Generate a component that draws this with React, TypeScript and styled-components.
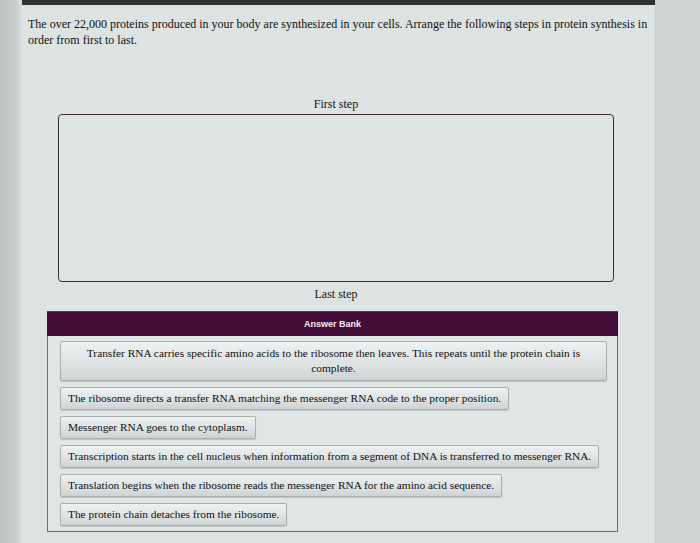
import styled, { createGlobalStyle } from 'styled-components';

const GlobalStyle = createGlobalStyle`
  html, body {
    margin: 0;
    padding: 0;
    background: #cfd5d5;
  }
  body {
    font-family: 'Liberation Serif', 'Times New Roman', serif;
    color: #141414;
  }
`;

const answers = [
  'Transfer RNA carries specific amino acids to the ribosome then leaves. This repeats until the protein chain is complete.',
  'The ribosome directs a transfer RNA matching the messenger RNA code to the proper position.',
  'Messenger RNA goes to the cytoplasm.',
  'Transcription starts in the cell nucleus when information from a segment of DNA is transferred to messenger RNA.',
  'Translation begins when the ribosome reads the messenger RNA for the amino acid sequence.',
  'The protein chain detaches from the ribosome.',
];

const App = () => {
  return (
    <>
      <GlobalStyle />
      <Shell>
        <LeftRail />
        <Page>
          <TopBar />
          <Question>
            The over 22,000 proteins produced in your body are synthesized in your cells. Arrange the following steps in protein synthesis in
            order from first to last.
          </Question>

          <Sorter>
            <StepLabel>First step</StepLabel>
            <DropZone />
            <StepLabel>Last step</StepLabel>
          </Sorter>

          <Bank>
            <BankHeader>Answer Bank</BankHeader>
            <BankBody>
              {answers.map((text, i) => (
                <Chip key={i} $wide={i === 0}>{text}</Chip>
              ))}
            </BankBody>
          </Bank>
        </Page>
        <RightRail />
      </Shell>
    </>
  );
};

export default App;

const Shell = styled.div`
  display: flex;
  width: 700px;
  height: 543px;
  overflow: hidden;
`;

const LeftRail = styled.div`
  width: 22px;
  flex-shrink: 0;
  background: linear-gradient(to right, #bcc3c3, #cbd1d1 80%, #d9dede);
`;

const RightRail = styled.div`
  flex: 1;
  background: #d0d6d6;
  border-left: 1px solid #c7cdcd;
`;

const Page = styled.div`
  width: 633px;
  flex-shrink: 0;
  background: #dde2e2;
  display: flex;
  flex-direction: column;
`;

const TopBar = styled.div`
  height: 5px;
  background: #2f3233;
`;

const Question = styled.p`
  margin: 11px 0 0 6px;
  font-size: 12px;
  line-height: 16px;
  color: #111;
`;

const Sorter = styled.div`
  width: 556px;
  margin: 46px 0 0 36px;
  display: flex;
  flex-direction: column;
  align-items: center;
`;

const StepLabel = styled.div`
  font-size: 12px;
  line-height: 14px;
  color: #151515;
  margin: 3px 0;
`;

const DropZone = styled.div`
  align-self: stretch;
  height: 166px;
  border: 1.5px solid #3b2e30;
  border-radius: 4px;
  background: #dfe4e4;
  margin-bottom: 2px;
`;

const Bank = styled.div`
  width: 571px;
  margin: 7px 0 0 25px;
`;

const BankHeader = styled.div`
  height: 24px;
  background: #430d3a;
  border-top: 1px solid #5a3a52;
  color: #f4eef2;
  font-family: 'Liberation Sans', Arial, sans-serif;
  font-size: 9px;
  font-weight: bold;
  display: flex;
  align-items: center;
  justify-content: center;
`;

const BankBody = styled.div`
  border: 1px solid #6d7070;
  border-top: none;
  background: #e0e5e5;
  padding: 5px 10px 5px 12px;
  display: flex;
  flex-direction: column;
  align-items: flex-start;
  gap: 6px;
`;

const Chip = styled.div<{ $wide?: boolean }>`
  align-self: ${p => (p.$wide ? 'stretch' : 'flex-start')};
  text-align: ${p => (p.$wide ? 'center' : 'left')};
  padding: ${p => (p.$wide ? '4px 20px' : '3px 7px')};
  font-size: 11.35px;
  line-height: 15px;
  color: #111;
  border: 1px solid #a9afaf;
  border-radius: 2px;
  background: linear-gradient(to bottom, #eef1f1, #dde1e1 60%, #cdd2d2);
  box-shadow: 0 1px 1px rgba(0, 0, 0, 0.15);
`;
